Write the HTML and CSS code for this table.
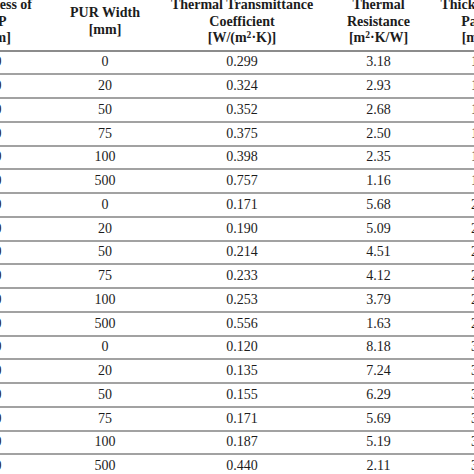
FILE: index.html
```html
<!DOCTYPE html>
<html lang="en">
<head>
<meta charset="utf-8">
<title>Thermal properties table</title>
<link rel="stylesheet" href="styles.css">
</head>
<body>
<table class="data">
  <colgroup>
    <col class="c1"><col class="c2"><col class="c3"><col class="c4"><col class="c5">
  </colgroup>
  <thead>
    <tr>
      <th>Thickness of<br>VIP<br>[mm]</th>
      <th>PUR Width<br>[mm]</th>
      <th>Thermal Transmittance<br>Coefficient<br>[W/(m<sup>2</sup>·K)]</th>
      <th>Thermal<br>Resistance<br>[m<sup>2</sup>·K/W]</th>
      <th>Thickness of<br>Panel<br>[mm]</th>
    </tr>
  </thead>
  <tbody>
    <tr><td>10</td><td>0</td><td>0.299</td><td>3.18</td><td>10</td></tr>
    <tr><td>10</td><td>20</td><td>0.324</td><td>2.93</td><td>10</td></tr>
    <tr><td>10</td><td>50</td><td>0.352</td><td>2.68</td><td>10</td></tr>
    <tr><td>10</td><td>75</td><td>0.375</td><td>2.50</td><td>10</td></tr>
    <tr><td>10</td><td>100</td><td>0.398</td><td>2.35</td><td>10</td></tr>
    <tr><td>10</td><td>500</td><td>0.757</td><td>1.16</td><td>10</td></tr>
    <tr><td>20</td><td>0</td><td>0.171</td><td>5.68</td><td>20</td></tr>
    <tr><td>20</td><td>20</td><td>0.190</td><td>5.09</td><td>20</td></tr>
    <tr><td>20</td><td>50</td><td>0.214</td><td>4.51</td><td>20</td></tr>
    <tr><td>20</td><td>75</td><td>0.233</td><td>4.12</td><td>20</td></tr>
    <tr><td>20</td><td>100</td><td>0.253</td><td>3.79</td><td>20</td></tr>
    <tr><td>20</td><td>500</td><td>0.556</td><td>1.63</td><td>20</td></tr>
    <tr><td>30</td><td>0</td><td>0.120</td><td>8.18</td><td>30</td></tr>
    <tr><td>30</td><td>20</td><td>0.135</td><td>7.24</td><td>30</td></tr>
    <tr><td>30</td><td>50</td><td>0.155</td><td>6.29</td><td>30</td></tr>
    <tr><td>30</td><td>75</td><td>0.171</td><td>5.69</td><td>30</td></tr>
    <tr><td>30</td><td>100</td><td>0.187</td><td>5.19</td><td>30</td></tr>
    <tr><td>30</td><td>500</td><td>0.440</td><td>2.11</td><td>30</td></tr>
  </tbody>
</table>
</body>
</html>
```

FILE: styles.css
```css
html, body {
  margin: 0;
  padding: 0;
  background: #ffffff;
  overflow: hidden;
}

body {
  width: 474px;
  height: 474px;
  font-family: "Liberation Serif", "Times New Roman", serif;
  font-size: 14px;
  color: #1c1c1c;
}

.data {
  table-layout: fixed;
  border-collapse: collapse;
  width: 586px;
  margin-left: -62px;
  margin-top: -3px;
}

.c1 { width: 113px; }
.c2 { width: 108px; }
.c3 { width: 166px; }
.c4 { width: 107px; }
.c5 { width: 92px; }

.data th {
  font-weight: bold;
  line-height: 16.5px;
  padding: 0 0 3px 0;
  text-align: center;
  vertical-align: middle;
  white-space: nowrap;
  border-bottom: 2px solid #8c8c8c;
}

.data sup {
  font-size: 0.68em;
  line-height: 0;
  vertical-align: 0.42em;
}

.data tbody tr {
  height: 23.76px;
}

.data td {
  padding: 0;
  line-height: 16px;
  text-align: center;
  vertical-align: middle;
  white-space: nowrap;
  border-bottom: 2px solid #a2a2a2;
}
```
